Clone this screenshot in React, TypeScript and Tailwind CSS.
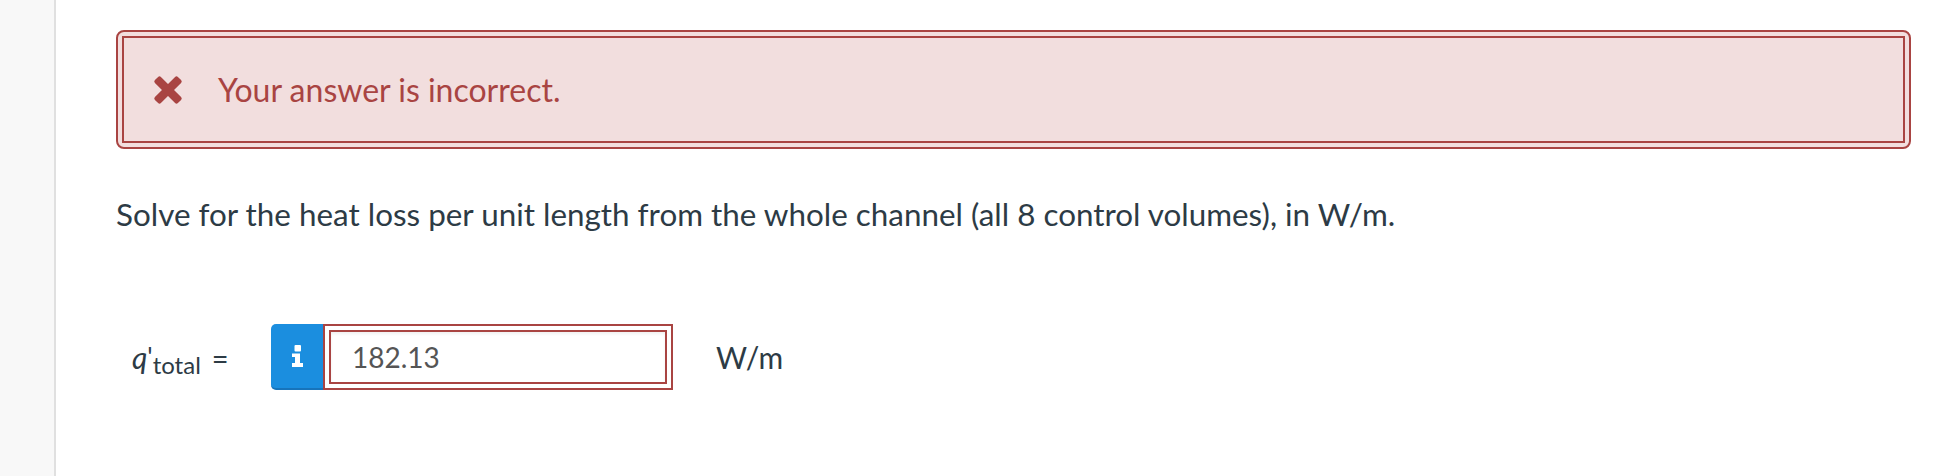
const XMark = () => (
  <svg width="30" height="30" viewBox="0 0 30 30" className="shrink-0">
    <g fill="#a94442" transform="rotate(45 15 15)">
      <rect x="-1.25" y="10.75" width="32.5" height="8.5" rx="2" />
      <rect x="10.75" y="-1.25" width="8.5" height="32.5" rx="2" />
    </g>
  </svg>
);

const InfoGlyph = () => (
  <svg width="11" height="22" viewBox="0 0 11 22">
    <g fill="#ffffff">
      <rect x="2.5" y="0" width="6.5" height="6.5" rx="1" />
      <path d="M0 8.5 H8 V18 H11 V22 H0 V18 H3 V12 H0 Z" />
    </g>
  </svg>
);

export default function App() {
  return (
    <div className="flex min-h-[476px] bg-white font-['Lato','Noto_Sans',sans-serif]">
      <aside className="w-[56px] shrink-0 border-r-2 border-[#e0e0e0] bg-[#f8f8f8]" />

      <main className="flex-1 pl-[60px] pr-[25px] pt-[30px]">
        <div className="rounded-lg border-2 border-[#a94442] bg-[#f2dede] p-[4px]">
          <div className="flex h-[107px] items-center gap-[35px] border-2 border-[#a94442] pl-[29px]">
            <XMark />
            <span className="text-[32px] leading-none text-[#a94442]">Your answer is incorrect.</span>
          </div>
        </div>

        <p className="mt-[46px] text-[31.4px] leading-[38px] text-[#2d3b45]">
          Solve for the heat loss per unit length from the whole channel (all 8 control volumes), in W/m.
        </p>

        <div className="mt-[91px] flex items-center">
          <div className="flex w-[155px] items-center pl-[16px] text-[#2d3b45]">
            <span className="text-[30px] italic leading-none">q</span>
            <span className="text-[26px] leading-none">'</span>
            <span className="relative top-[8px] text-[24px] leading-none">total</span>
            <span className="ml-[11px] text-[29px] leading-none">=</span>
          </div>

          <div className="flex h-[66px]">
            <button
              type="button"
              className="flex w-[52px] items-center justify-center rounded-l-[5px] border-b-2 border-[#1774bb] bg-[#1b8edf]"
            >
              <InfoGlyph />
            </button>
            <div className="border-2 border-[#a94442] bg-white p-[4px]">
              <div className="flex h-full w-[338px] items-center border-2 border-[#a94442] pl-[21px] shadow-[inset_0_2px_3px_rgba(0,0,0,0.06)]">
                <span className="text-[28px] text-[#555555]">182.13</span>
              </div>
            </div>
          </div>

          <span className="ml-[43px] text-[30px] text-[#2d3b45]">W/m</span>
        </div>
      </main>
    </div>
  );
}
